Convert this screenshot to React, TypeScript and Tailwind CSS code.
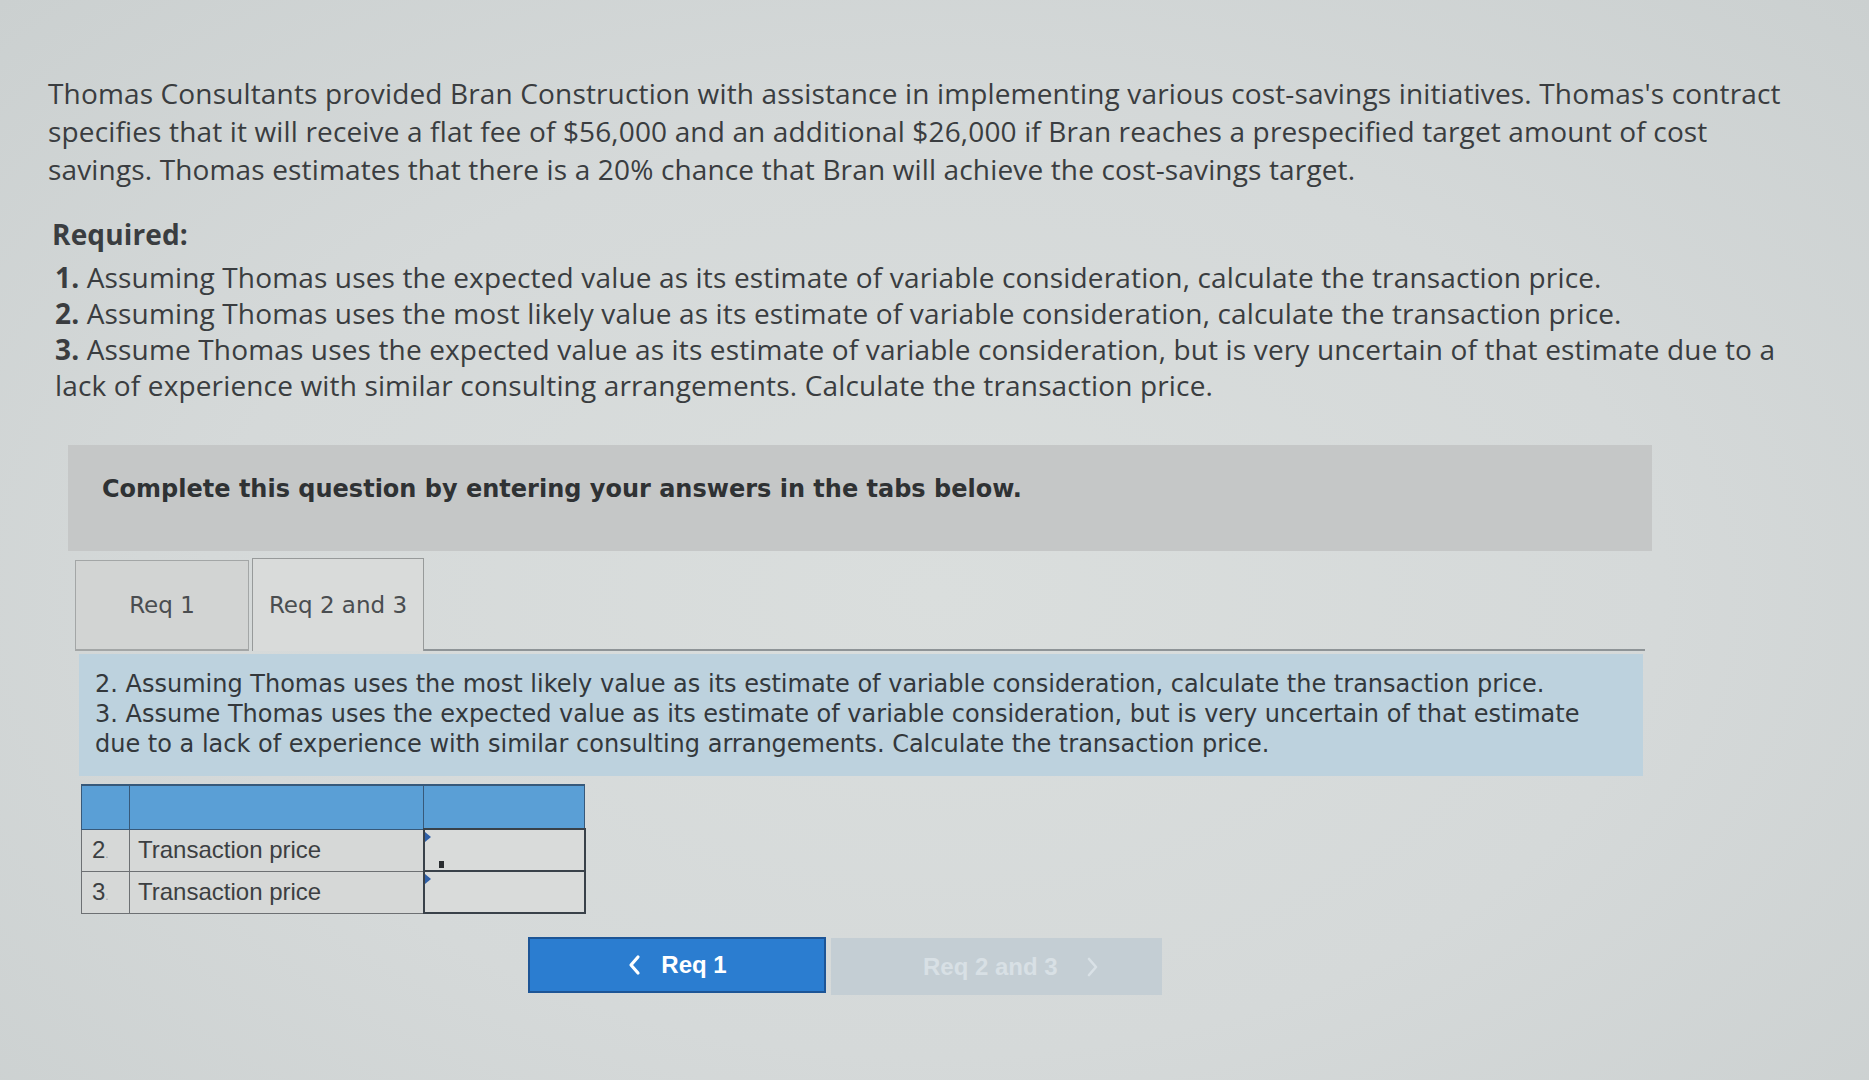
import React from 'react';

const serifless = { fontFamily: '"Open Sans", "Liberation Sans", sans-serif' };
const verdana = { fontFamily: '"DejaVu Sans", Verdana, sans-serif' };
const arial = { fontFamily: '"Liberation Sans", Arial, sans-serif' };

function ChevronLeft() {
  return (
    <svg width="14" height="22" viewBox="0 0 14 22" fill="none">
      <polyline points="11,3 4,11 11,19" stroke="white" strokeWidth="3.2" strokeLinecap="round" strokeLinejoin="round" />
    </svg>
  );
}

function ChevronRight() {
  return (
    <svg width="14" height="22" viewBox="0 0 14 22" fill="none">
      <polyline points="3,3 10,11 3,19" stroke="#d9e1e6" strokeWidth="2.6" strokeLinecap="round" strokeLinejoin="round" />
    </svg>
  );
}

function InputCell({ cursor }: { cursor?: boolean }) {
  return (
    <td className="relative border-2 border-[#394149] bg-[#d9dbda] p-0">
      {/* dropdown marker */}
      <span className="absolute left-0 top-[2px] h-0 w-0 border-y-[5px] border-l-[6px] border-y-transparent border-l-[#2f5fa6]" />
      {cursor && <span className="absolute bottom-[2px] left-[14px] h-[7px] w-[5px] bg-[#2a2d30]" />}
    </td>
  );
}

export default function App() {
  const rows = [
    { num: '2', label: 'Transaction price', cursor: true },
    { num: '3', label: 'Transaction price', cursor: false },
  ];

  return (
    <div className="min-h-[1080px] w-full bg-[#d5d9d9] bg-[radial-gradient(ellipse_at_50%_55%,#dadedd_0%,#d5d9d9_55%,#cbd0d0_100%)] text-[#3a3d40]">
      <div className="pl-[48px] pt-[74px]">
        {/* Problem text */}
        <div style={serifless} className="text-[28px] leading-[38px] tracking-[0.15px]">
          <p>
            Thomas Consultants provided Bran Construction with assistance in implementing various cost-savings initiatives. Thomas's contract
            <br />
            specifies that it will receive a flat fee of $56,000 and an additional $26,000 if Bran reaches a prespecified target amount of cost
            <br />
            savings. Thomas estimates that there is a 20% chance that Bran will achieve the cost-savings target.
          </p>

          <p className="mt-[27px] pl-[4px] font-bold">Required:</p>
          <div className="mt-[6px] pl-[7px] leading-[36px]">
            <p>
              <span className="font-bold">1.</span> Assuming Thomas uses the expected value as its estimate of variable consideration, calculate the transaction price.
            </p>
            <p>
              <span className="font-bold">2.</span> Assuming Thomas uses the most likely value as its estimate of variable consideration, calculate the transaction price.
            </p>
            <p>
              <span className="font-bold">3.</span> Assume Thomas uses the expected value as its estimate of variable consideration, but is very uncertain of that estimate due to a
              <br />
              lack of experience with similar consulting arrangements. Calculate the transaction price.
            </p>
          </div>
        </div>

        {/* Question panel */}
        <div className="ml-[20px] mt-[42px] w-[1584px]">
          <div className="h-[106px] bg-[#c5c7c7] pl-[34px] pt-[29px]">
            <p style={verdana} className="text-[24px] font-bold leading-[30px] text-[#2f3234]">
              Complete this question by entering your answers in the tabs below.
            </p>
          </div>

          {/* Tabs */}
          <div style={verdana} className="ml-[7px] mr-[7px] mt-[7px] flex items-end text-[23px] text-[#4a4d50]">
            <div className="flex h-[91px] w-[174px] items-center justify-center border border-b-2 border-[#a3a6a6] bg-[#d2d4d3]">
              Req 1
            </div>
            <div className="ml-[3px] flex h-[93px] w-[172px] items-center justify-center border border-b-0 border-[#979a9a] bg-[#d9dbda]">
              Req 2 and 3
            </div>
            <div className="h-0 flex-1 border-b-2 border-[#8e9497]" />
          </div>

          {/* Instructions */}
          <div style={verdana} className="ml-[11px] mr-[9px] mt-[3px] bg-[#bdd2de] pb-[17px] pl-[16px] pt-[15px] text-[24px] leading-[30px] text-[#33383c]">
            2. Assuming Thomas uses the most likely value as its estimate of variable consideration, calculate the transaction price.
            <br />
            3. Assume Thomas uses the expected value as its estimate of variable consideration, but is very uncertain of that estimate
            <br />
            due to a lack of experience with similar consulting arrangements. Calculate the transaction price.
          </div>

          {/* Answer table */}
          <table style={arial} className="ml-[13px] mt-[8px] border-collapse text-[24px] text-[#3c3f42]">
            <thead>
              <tr className="h-[44px] bg-[#5a9fd6]">
                <th className="w-[48px] border border-t-2 border-[#37597a] p-0" />
                <th className="w-[294px] border border-t-2 border-[#37597a] p-0" />
                <th className="w-[161px] border border-t-2 border-[#37597a] p-0" />
              </tr>
            </thead>
            <tbody>
              {rows.map((row) => (
                <tr key={row.num} className="h-[42px]">
                  <td className="border border-[#6d7073] bg-[#d6d8d7] pl-[10px] align-middle">
                    {row.num}
                    <span className="text-[12px] text-[#9a9d9f]">.</span>
                  </td>
                  <td className="border border-[#6d7073] bg-[#d6d8d7] pl-[8px] align-middle">{row.label}</td>
                  <InputCell cursor={row.cursor} />
                </tr>
              ))}
            </tbody>
          </table>

          {/* Navigation */}
          <div style={arial} className="ml-[460px] mt-[23px] flex items-start gap-[5px]">
            <button className="flex h-[56px] w-[298px] items-center justify-center gap-[20px] border-2 border-[#1d5596] bg-[#2b7dd0] text-[24px] font-bold text-white">
              <ChevronLeft />
              <span>Req 1</span>
            </button>
            <button className="mt-[1px] flex h-[57px] w-[331px] items-center gap-[28px] bg-[#c4ced4] pl-[92px] text-[24px] font-bold text-[#d8e0e5]">
              <span>Req 2 and 3</span>
              <ChevronRight />
            </button>
          </div>
        </div>
      </div>
    </div>
  );
}
